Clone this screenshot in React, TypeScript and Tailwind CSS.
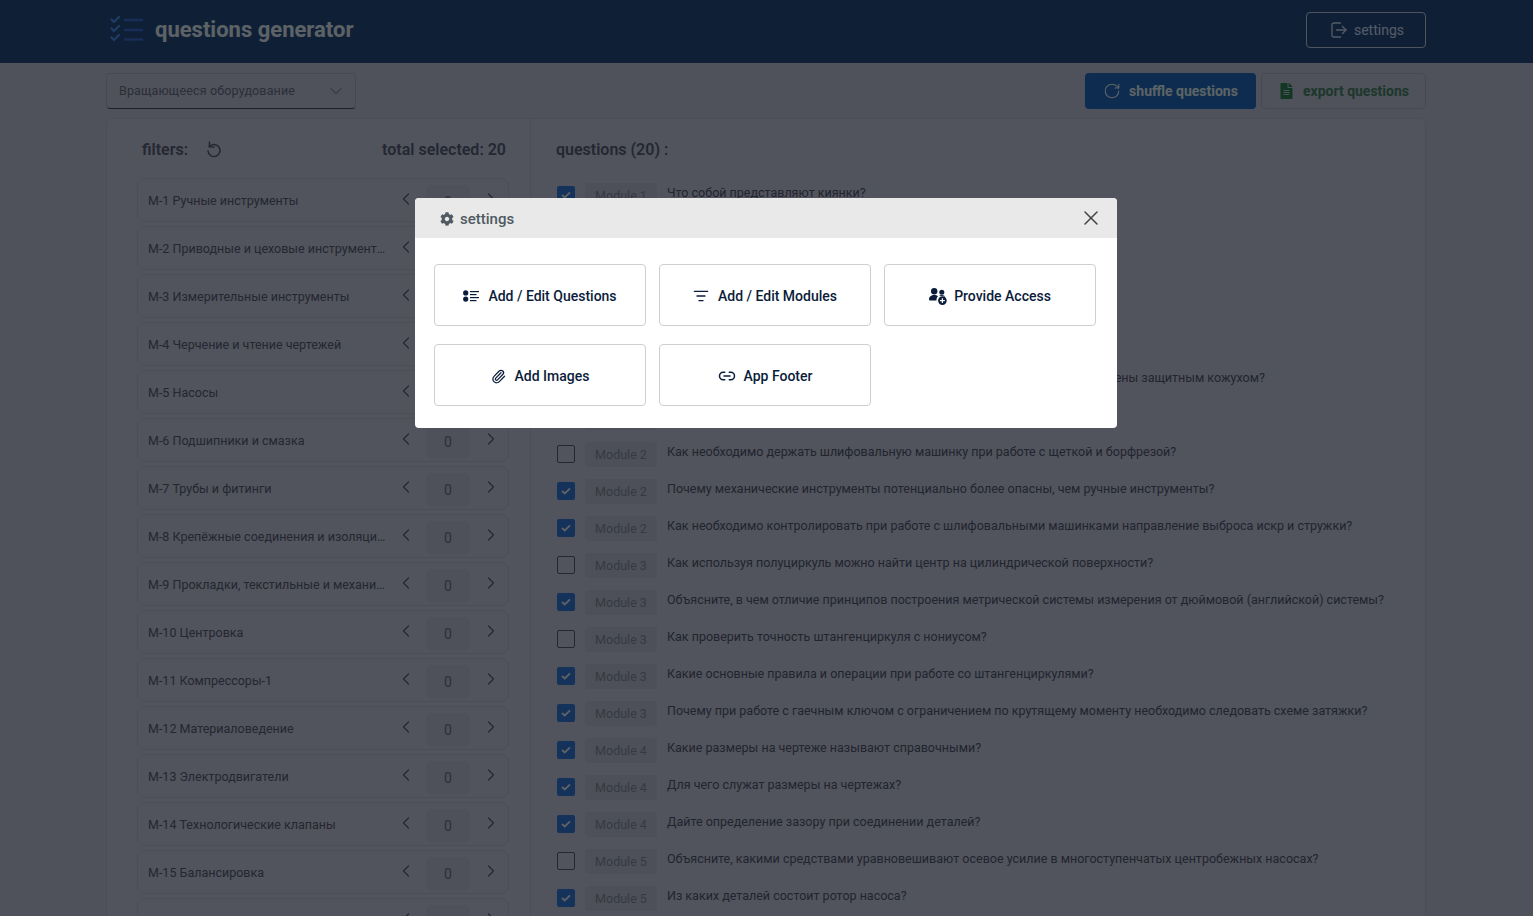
import React from "react";
import {
  ChevronDown,
  ChevronLeft,
  ChevronRight,
  Link2,
  ListFilter,
  Paperclip,
  RotateCw,
  X,
} from "lucide-react";
import { FaCog, FaFileAlt } from "react-icons/fa";

const filters = [
  "M-1 Ручные инструменты",
  "M-2 Приводные и цеховые инструменты",
  "M-3 Измерительные инструменты",
  "M-4 Черчение и чтение чертежей",
  "M-5 Насосы",
  "M-6 Подшипники и смазка",
  "M-7 Трубы и фитинги",
  "M-8 Крепёжные соединения и изоляционные материалы",
  "M-9 Прокладки, текстильные и механические уплотнения",
  "M-10 Центровка",
  "M-11 Компрессоры-1",
  "M-12 Материаловедение",
  "M-13 Электродвигатели",
  "M-14 Технологические клапаны",
  "M-15 Балансировка",
  "M-16 Смазка",
];

const questions = [
  { checked: true, module: "Module 1", text: "Что собой представляют киянки?" },
  { checked: true, module: "Module 1", text: "Для чего служат зубила?" },
  { checked: false, module: "Module 1", text: "Какие бывают напильники?" },
  { checked: true, module: "Module 1", text: "Как выбрать гаечный ключ?" },
  { checked: true, module: "Module 2", text: "Какие бывают дрели?" },
  { checked: true, module: "Module 2", text: "Почему угловые шлифовальные машинки при работах должны быть снабжены защитным кожухом?" },
  { checked: false, module: "Module 2", text: "Как работать с дрелью?" },
  { checked: false, module: "Module 2", text: "Как необходимо держать шлифовальную машинку при работе с щеткой и борфрезой?" },
  { checked: true, module: "Module 2", text: "Почему механические инструменты потенциально более опасны, чем ручные инструменты?" },
  { checked: true, module: "Module 2", text: "Как необходимо контролировать при работе с шлифовальными машинками направление выброса искр и стружки?" },
  { checked: false, module: "Module 3", text: "Как используя полуциркуль можно найти центр на цилиндрической поверхности?" },
  { checked: true, module: "Module 3", text: "Объясните, в чем отличие принципов построения метрической системы измерения от дюймовой (английской) системы?" },
  { checked: false, module: "Module 3", text: "Как проверить точность штангенциркуля с нониусом?" },
  { checked: true, module: "Module 3", text: "Какие основные правила и операции при работе со штангенциркулями?" },
  { checked: true, module: "Module 3", text: "Почему при работе с гаечным ключом с ограничением по крутящему моменту необходимо следовать схеме затяжки?" },
  { checked: true, module: "Module 4", text: "Какие размеры на чертеже называют справочными?" },
  { checked: true, module: "Module 4", text: "Для чего служат размеры на чертежах?" },
  { checked: true, module: "Module 4", text: "Дайте определение зазору при соединении деталей?" },
  { checked: false, module: "Module 5", text: "Объясните, какими средствами уравновешивают осевое усилие в многоступенчатых центробежных насосах?" },
  { checked: true, module: "Module 5", text: "Из каких деталей состоит ротор насоса?" },
];

function LogoIcon() {
  return (
    <svg width="34" height="30" viewBox="0 0 34 30" fill="none" strokeLinecap="round" strokeLinejoin="round">
      <g stroke="#4b96fa" strokeWidth="2.2">
        <path d="M1.5 4.5l2.5 2.5 5-5" />
        <path d="M1.5 13.5l2.5 2.5 5-5" />
        <path d="M1.5 22.5l2.5 2.5 5-5" />
      </g>
      <g stroke="#3e70e1" strokeWidth="2.4" strokeLinecap="butt">
        <path d="M14 5h19" />
        <path d="M14 15h19" />
        <path d="M14 24.500h19" />
      </g>
    </svg>
  );
}

function ExitIcon() {
  return (
    <svg width="16" height="16" viewBox="0 0 16 16" fill="none" stroke="currentColor" strokeWidth="1.3" strokeLinecap="round" strokeLinejoin="round">
      <path d="M9.500 1H3a2 2 0 0 0-2 2v10a2 2 0 0 0 2 2h6.500" />
      <path d="M5.500 8H15" />
      <path d="M11.500 4.500L15 8l-3.500 3.500" />
    </svg>
  );
}

function ResetIcon() {
  return (
    <svg width="16" height="17" viewBox="0 0 16 17" fill="none" stroke="currentColor" strokeWidth="1.5" strokeLinecap="round" strokeLinejoin="round" className="mt-[-2px]">
      <path d="M3.300 5.800a6 6 0 1 1-1.300 4.200" />
      <path d="M3.500 1l-.2 4.800 4.700.2" />
    </svg>
  );
}

function QuestionsIcon() {
  return (
    <svg width="16" height="12" viewBox="0 0 16 12" fill="#0b1c3a">
      <circle cx="2.700" cy="2.900" r="2.600" />
      <circle cx="2.700" cy="9.100" r="2.600" />
      <rect x="7" y="1" width="9" height="1.200" />
      <rect x="7" y="4" width="6.500" height="1.200" />
      <rect x="7" y="7" width="9" height="1.200" />
      <rect x="7" y="10" width="6.500" height="1.200" />
    </svg>
  );
}

function AccessIcon() {
  return (
    <svg width="18" height="17" viewBox="0 0 18 17" fill="#0b1c3a">
      <circle cx="5.200" cy="3.300" r="3.200" />
      <path d="M0 11.500c0-3 2.300-4.500 5.200-4.500 1.500 0 2.900.4 3.800 1.300-1 .9-1.500 2.200-1.500 3.500v.7H1a1 1 0 0 1-1-1z" />
      <circle cx="12.800" cy="4.200" r="2.500" />
      <path d="M10 8c.8-.7 1.700-1 2.800-1 1.600 0 2.900.7 3.400 1.800-1.800-.8-4.500-.6-6.200-.8z" />
      <circle cx="13.400" cy="12.600" r="4.300" />
      <path d="M12.800 10.200h1.200v1.800h1.800v1.200H14V15h-1.200v-1.800H11V12h1.800z" fill="#fff" />
    </svg>
  );
}

function FilterRow({ name }: { name: string }) {
  return (
    <div className="h-11 shrink-0 rounded-lg border border-[#bcc4da] flex items-center pl-[10px] text-[#5c607c]">
      <span className="w-[238px] truncate text-[12.5px] leading-5 mt-[1px]">{name}</span>
      <ChevronLeft className="w-5 h-5 ml-[10px] mt-[-3px] text-[#5f6480]" strokeWidth={1.5} />
      <div className="w-11 h-[33px] ml-[10px] mt-[3px] rounded-md bg-[#c2cadf] flex items-center justify-center text-sm text-[#6e7390]">
        0
      </div>
      <ChevronRight className="w-5 h-5 ml-[11px] mt-[-3px] text-[#5f6480]" strokeWidth={1.5} />
    </div>
  );
}

function QuestionRow({ checked, module, text }: { checked: boolean; module: string; text: string }) {
  return (
    <div className="h-[37px] shrink-0 flex items-start">
      {checked ? (
        <div className="w-[18px] h-[18px] mt-[3px] rounded-[2px] bg-[#327de1] flex items-center justify-center">
          <svg width="10" height="8" viewBox="0 0 10 8" fill="none" stroke="#f0f4fa" strokeWidth="1.800">
            <path d="M1 4l2.800 2.500L9 1.300" />
          </svg>
        </div>
      ) : (
        <div className="w-[18px] h-[18px] mt-[3px] rounded-[2px] border border-[#5a5f78]" />
      )}
      <div className="w-[72px] h-[25px] pt-[2px] ml-[10px] rounded bg-[#c0c8dd] flex items-center justify-center text-[12.5px] text-[#8a90a6]">
        {module}
      </div>
      <span className="ml-[10px] text-[12.5px] leading-5 text-[#565a78] whitespace-nowrap">{text}</span>
    </div>
  );
}

function SettingsButton({ icon, label, gap }: { icon: React.ReactNode; label: string; gap: string }) {
  return (
    <button className={`h-[62px] pt-[2px] rounded border border-[#cfcfcf] bg-white flex items-center justify-center text-sm font-medium text-[#0b1c3a] ${gap}`}>
      {icon}
      {label}
    </button>
  );
}

export default function App() {
  return (
    <div className="relative h-[916px] overflow-hidden bg-[#c6cde1] font-[Roboto,sans-serif]">
      {/* Top bar */}
      <header className="h-[63px] bg-[#265087] flex items-center justify-between pl-[110px] pr-[107px] pb-[3px]">
        <div className="flex items-center gap-[11px]">
          <LogoIcon />
          <span className="text-[22px] font-bold text-[#e6f5ff] mt-[-1px]">questions generator</span>
        </div>
        <button className="w-[120px] h-9 pl-[3px] pb-[1px] rounded border border-[#c8d2ec] flex items-center justify-center gap-[7px] text-sm text-[#d5e1ff]">
          <ExitIcon />
          settings
        </button>
      </header>

      {/* Toolbar */}
      <div className="mt-[9px] pl-[106px] pr-[107px] flex items-center justify-between">
        <div className="w-[250px] h-9 pt-[1px] rounded border border-[#afb7cd] border-b-[#4a4f66] flex items-center justify-between pl-3 pr-[9px] text-[12.5px] tracking-[0.15px] text-[#6e7390]">
          Вращающееся оборудование
          <ChevronDown className="w-5 h-5 text-[#7e8499]" strokeWidth={1.25} />
        </div>
        <div className="flex items-center gap-[5px] mt-[1px]">
          <button className="w-[171px] h-9 rounded bg-[#236ec6] flex items-center justify-center gap-2 text-sm font-bold text-[#e6faff]">
            <RotateCw className="w-[18px] h-[18px]" strokeWidth={1.5} />
            shuffle questions
          </button>
          <button className="w-[165px] h-9 pl-[2px] rounded border border-[#afb7cd] flex items-center justify-center gap-[10px] text-sm font-bold text-[#4a8a6c]">
            <FaFileAlt className="w-[13px] h-[16px] text-[#2f8a5c]" />
            export questions
          </button>
        </div>
      </div>

      {/* Main card */}
      <main className="mt-[9px] ml-[106px] mr-[107px] rounded-md border border-[#bcc4da] bg-[#cad2e6] flex h-[900px]">
        <section className="w-[423px] shrink-0 pl-[30px] pr-[21px] pt-[21px] flex flex-col">
          <div className="h-5 pl-[5px] pr-[3px] flex items-center justify-between text-base font-semibold text-[#5c6280]">
            <div className="flex items-center gap-[18px]">
              filters:
              <ResetIcon />
            </div>
            total selected: 20
          </div>
          <div className="mt-[18px] flex flex-col gap-1">
            {filters.map((name) => (
              <FilterRow key={name} name={name} />
            ))}
          </div>
        </section>
        <section className="flex-1 border-l border-[#bcc4da] pl-[26px] pt-[21px] flex flex-col">
          <div className="h-5 -ml-[1px] flex items-center text-base font-semibold text-[#5c6280]">questions (20) :</div>
          <div className="mt-[23px] flex flex-col">
            {questions.map((q) => (
              <QuestionRow key={q.text} checked={q.checked} module={q.module} text={q.text} />
            ))}
          </div>
        </section>
      </main>

      {/* Backdrop */}
      <div className="absolute inset-0 bg-black/60" />

      {/* Settings dialog */}
      <div className="absolute left-[415px] top-[198px] w-[702px] h-[230px] rounded bg-white overflow-hidden">
        <div className="h-10 bg-[#e9e9e9] flex items-center justify-between pl-[25px] pr-[14px]">
          <div className="flex items-center gap-[6px] pt-[2px] text-[15px] font-medium text-[#4f5a62]">
            <FaCog className="w-[14px] h-[14px]" />
            settings
          </div>
          <X className="w-6 h-6 text-[#444444] mt-[-1px]" strokeWidth={1.5} />
        </div>
        <div className="pt-[26px] pl-[19px] pr-[21px] grid grid-cols-3 gap-x-[13px] gap-y-[18px]">
          <SettingsButton gap="gap-[9px]" icon={<QuestionsIcon />} label="Add / Edit Questions" />
          <SettingsButton gap="gap-[9px]" icon={<ListFilter className="w-4 h-4" strokeWidth={2} />} label="Add / Edit Modules" />
          <SettingsButton gap="gap-[7px]" icon={<AccessIcon />} label="Provide Access" />
          <SettingsButton gap="gap-[9px]" icon={<Paperclip className="w-[15px] h-[15px]" strokeWidth={2} />} label="Add Images" />
          <SettingsButton gap="gap-2" icon={<Link2 className="w-[18px] h-[18px]" strokeWidth={2} />} label="App Footer" />
        </div>
      </div>
    </div>
  );
}
